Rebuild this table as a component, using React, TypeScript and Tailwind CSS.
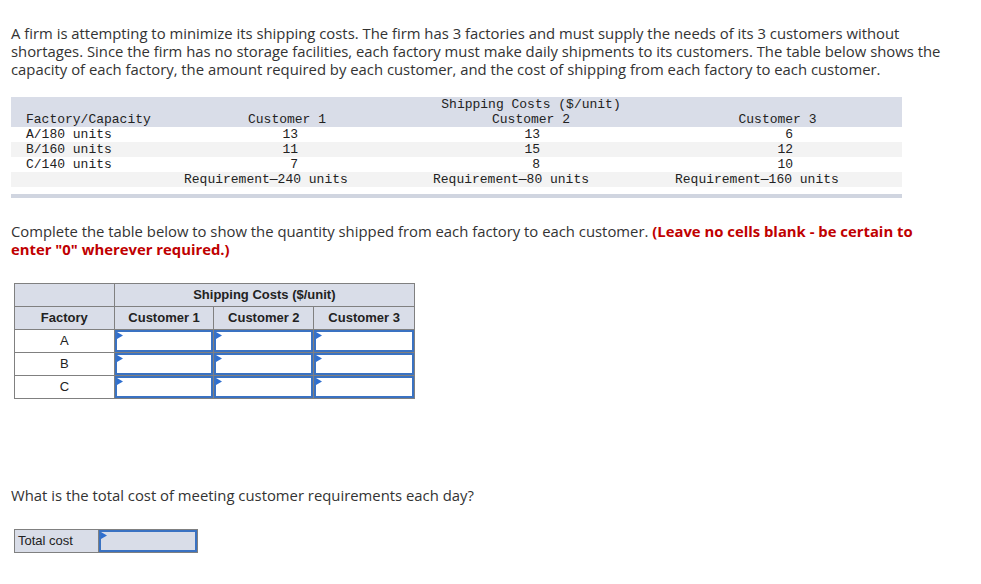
import React from "react";

const mono = { fontFamily: '"Liberation Mono", "Courier New", monospace' };

function Flag() {
  return (
    <svg className="absolute left-0 top-0" width="7" height="8" viewBox="0 0 7 8">
      <polygon points="0,0 6,3.5 0,7" fill="#2f6fcf" />
    </svg>
  );
}

function InputCell({ bg = "bg-white" }: { bg?: string }) {
  return (
    <div className={`relative h-full w-full border-2 border-[#3a72c2] ${bg}`}>
      <Flag />
    </div>
  );
}

export default function App() {
  const rows = [
    ["A/180 units", "13", "13", "6"],
    ["B/160 units", "11", "15", "12"],
    ["C/140 units", "7", "8", "10"],
  ];
  return (
    <div
      className="w-[981px] h-[584px] bg-white text-[#333] overflow-hidden"
      style={{ fontFamily: '"Open Sans", "Lato", sans-serif' }}
    >
      <div className="pl-[11px] pt-[24px] text-[14.85px] leading-[18px] whitespace-nowrap">
        <div>A firm is attempting to minimize its shipping costs. The firm has 3 factories and must supply the needs of its 3 customers without</div>
        <div>shortages. Since the firm has no storage facilities, each factory must make daily shipments to its customers. The table below shows the</div>
        <div>capacity of each factory, the amount required by each customer, and the cost of shipping from each factory to each customer.</div>
      </div>

      {/* top data table */}
      <div className="ml-[11px] mt-[19px] w-[891px] text-[13px] leading-[15px] text-[#222]" style={mono}>
        <div className="bg-[#d9dde8]">
          <div className="grid grid-cols-[154px_244px_244px_249px] h-[15px] items-center">
            <div />
            <div />
            <div className="text-center">Shipping Costs ($/unit)</div>
            <div />
          </div>
          <div className="grid grid-cols-[154px_244px_244px_249px] h-[15px] items-center">
            <div className="pl-[15px]">Factory/Capacity</div>
            <div className="text-center">Customer 1</div>
            <div className="text-center">Customer 2</div>
            <div className="text-center">Customer 3</div>
          </div>
        </div>
        {rows.map((r, i) => (
          <div
            key={i}
            className={`grid grid-cols-[154px_244px_244px_249px] h-[15px] items-center ${i === 1 ? "bg-[#f3f3f3]" : "bg-white"}`}
          >
            <div className="pl-[15px]">{r[0]}</div>
            <div className="text-right pr-[111px]">{r[1]}</div>
            <div className="text-right pr-[113px]">{r[2]}</div>
            <div className="text-right pr-[109px]">{r[3]}</div>
          </div>
        ))}
        <div className="grid grid-cols-[154px_244px_244px_249px] h-[15px] items-center bg-[#f3f3f3]">
          <div />
          <div className="pl-[19px]">Requirement—240 units</div>
          <div className="pl-[24px]">Requirement—80 units</div>
          <div className="pl-[22px]">Requirement—160 units</div>
        </div>
        <div className="mt-[7px] h-[4px] bg-[#d0d5e0]" />
      </div>

      <div className="pl-[11px] mt-[24px] text-[14.85px] leading-[18px] whitespace-nowrap">
        <div>
          Complete the table below to show the quantity shipped from each factory to each customer.{" "}
          <span className="font-bold text-[#c00000]">(Leave no cells blank - be certain to</span>
        </div>
        <div className="font-bold text-[#c00000]">enter "0" wherever required.)</div>
      </div>

      {/* input table */}
      <div
        className="ml-[14px] mt-[25px] w-[401px] text-[13px] text-[#222]"
        style={{ fontFamily: '"Liberation Sans", Arial, sans-serif' }}
      >
        <table className="border-collapse">
          <tbody>
            <tr className="h-[23px] bg-[#d9dde8]">
              <td className="w-[100px] border border-[#808080]" />
              <td colSpan={3} className="border border-[#808080] text-center font-bold">
                Shipping Costs ($/unit)
              </td>
            </tr>
            <tr className="h-[23px] bg-[#d9dde8] font-bold">
              <td className="w-[100px] border border-[#808080] text-center">Factory</td>
              <td className="w-[100px] border border-[#808080] text-center">Customer 1</td>
              <td className="w-[100px] border border-[#808080] text-center">Customer 2</td>
              <td className="w-[101px] border border-[#808080] text-center">Customer 3</td>
            </tr>
            {["A", "B", "C"].map((l) => (
              <tr key={l} className="h-[23px]">
                <td className="border border-[#808080] text-center">{l}</td>
                <td className="border border-[#808080] p-0 h-[23px]">
                  <InputCell />
                </td>
                <td className="border border-[#808080] p-0 h-[23px]">
                  <InputCell />
                </td>
                <td className="border border-[#808080] p-0 h-[23px]">
                  <InputCell />
                </td>
              </tr>
            ))}
          </tbody>
        </table>
      </div>

      <div className="pl-[11px] mt-[87px] text-[14.85px] leading-[18px]">
        What is the total cost of meeting customer requirements each day?
      </div>

      <div
        className="ml-[14px] mt-[25px] flex h-[24px] w-[184px] text-[13px] text-[#222]"
        style={{ fontFamily: '"Liberation Sans", Arial, sans-serif' }}
      >
        <div className="w-[85px] border border-[#808080] bg-[#d9dde8] pl-[3px] flex items-center">Total cost</div>
        <div className="w-[99px] border border-l-0 border-[#808080] bg-[#d9dde8]">
          <InputCell bg="bg-[#d9dde8]" />
        </div>
      </div>
    </div>
  );
}
